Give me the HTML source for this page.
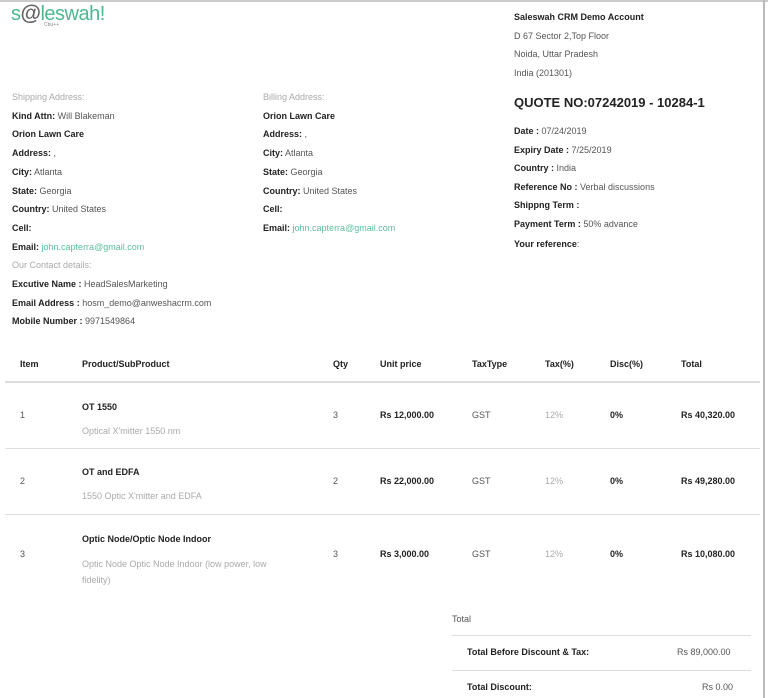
<!DOCTYPE html>
<html><head><meta charset="utf-8"><style>
body{margin:0;width:768px;height:698px;background:#fff;position:relative;overflow:hidden;font-family:"Liberation Sans",sans-serif;font-size:9px;color:#555;}
.a{position:absolute;white-space:nowrap;}
b{color:#222;font-weight:bold;}
.g{color:#aaa;}
.t{color:#5bbf9f;}
.hr{position:absolute;height:1px;background:#ddd;}
</style></head><body>
<div style="position:absolute;left:0;top:0;width:768px;height:2px;background:#ccc"></div>
<div style="position:absolute;left:763px;top:0;width:2px;height:698px;background:#bbb"></div>

<div class="a" style="left:11px;top:2px;font-size:20px;color:#4cb98f;letter-spacing:-0.5px">s<span style="color:#666;font-weight:bold;font-size:21px">@</span>leswah!</div>
<div class="a" style="left:44px;top:22px;font-size:5px;color:#888">Cbu++</div>

<div class="a" style="left:12px;top:88px;line-height:18.7px">
<span class="g">Shipping Address:</span><br>
<b>Kind Attn:</b> Will Blakeman<br>
<b>Orion Lawn Care</b><br>
<b>Address:</b> ,<br>
<b>City:</b> Atlanta<br>
<b>State:</b> Georgia<br>
<b>Country:</b> United States<br>
<b>Cell:</b><br>
<b>Email:</b> <span class="t">john.capterra@gmail.com</span><br>
<span class="g">Our Contact details:</span><br>
<b>Excutive Name :</b> HeadSalesMarketing<br>
<b>Email Address :</b> hosm_demo@anweshacrm.com<br>
<b>Mobile Number :</b> 9971549864
</div>

<div class="a" style="left:263px;top:88px;line-height:18.7px">
<span class="g">Billing Address:</span><br>
<b>Orion Lawn Care</b><br>
<b>Address:</b> ,<br>
<b>City:</b> Atlanta<br>
<b>State:</b> Georgia<br>
<b>Country:</b> United States<br>
<b>Cell:</b><br>
<b>Email:</b> <span class="t">john.capterra@gmail.com</span>
</div>

<div class="a" style="left:514px;top:8px;line-height:18.7px">
<b>Saleswah CRM Demo Account</b><br>D 67 Sector 2,Top Floor<br>Noida, Uttar Pradesh<br>India (201301)
</div>
<div class="a" style="left:514px;top:95px;font-size:13px;font-weight:bold;color:#222">QUOTE NO:07242019 - 10284-1</div>
<div class="a" style="left:514px;top:122px;line-height:18.5px">
<b>Date :</b> 07/24/2019<br><b>Expiry Date :</b> 7/25/2019<br><b>Country :</b> India<br><b>Reference No :</b> Verbal discussions<br><b>Shippng Term :</b><br><b>Payment Term :</b> 50% advance
</div>
<div class="a" style="left:514px;top:239px"><b>Your reference</b>:</div>

<div class="a" style="left:20px;top:359px;font-weight:bold;color:#222">Item</div>
<div class="a" style="left:82px;top:359px;font-weight:bold;color:#222">Product/SubProduct</div>
<div class="a" style="left:333px;top:359px;font-weight:bold;color:#222">Qty</div>
<div class="a" style="left:380px;top:359px;font-weight:bold;color:#222">Unit price</div>
<div class="a" style="left:472px;top:359px;font-weight:bold;color:#222">TaxType</div>
<div class="a" style="left:545px;top:359px;font-weight:bold;color:#222">Tax(%)</div>
<div class="a" style="left:610px;top:359px;font-weight:bold;color:#222">Disc(%)</div>
<div class="a" style="left:681px;top:359px;font-weight:bold;color:#222">Total</div>
<div class="hr" style="left:5px;top:381px;width:755px;height:2px"></div>

<div class="a" style="left:20px;top:410px">1</div>
<div class="a" style="left:82px;top:402px"><b>OT 1550</b></div>
<div class="a g" style="left:82px;top:426px">Optical X'mitter 1550 nm</div>
<div class="a" style="left:333px;top:410px">3</div>
<div class="a" style="left:380px;top:410px"><b>Rs 12,000.00</b></div>
<div class="a" style="left:472px;top:410px">GST</div>
<div class="a g" style="left:545px;top:410px">12%</div>
<div class="a" style="left:610px;top:410px"><b>0%</b></div>
<div class="a" style="left:681px;top:410px"><b>Rs 40,320.00</b></div>
<div class="hr" style="left:5px;top:448px;width:755px"></div>

<div class="a" style="left:20px;top:476px">2</div>
<div class="a" style="left:82px;top:467px"><b>OT and EDFA</b></div>
<div class="a g" style="left:82px;top:491px">1550 Optic X'mitter and EDFA</div>
<div class="a" style="left:333px;top:476px">2</div>
<div class="a" style="left:380px;top:476px"><b>Rs 22,000.00</b></div>
<div class="a" style="left:472px;top:476px">GST</div>
<div class="a g" style="left:545px;top:476px">12%</div>
<div class="a" style="left:610px;top:476px"><b>0%</b></div>
<div class="a" style="left:681px;top:476px"><b>Rs 49,280.00</b></div>
<div class="hr" style="left:5px;top:514px;width:755px"></div>

<div class="a" style="left:20px;top:549px">3</div>
<div class="a" style="left:82px;top:534px"><b>Optic Node/Optic Node Indoor</b></div>
<div class="a g" style="left:82px;top:556px;line-height:16px;white-space:normal;width:210px">Optic Node Optic Node Indoor (low power, low fidelity)</div>
<div class="a" style="left:333px;top:549px">3</div>
<div class="a" style="left:380px;top:549px"><b>Rs 3,000.00</b></div>
<div class="a" style="left:472px;top:549px">GST</div>
<div class="a g" style="left:545px;top:549px">12%</div>
<div class="a" style="left:610px;top:549px"><b>0%</b></div>
<div class="a" style="left:681px;top:549px"><b>Rs 10,080.00</b></div>

<div class="a" style="left:452px;top:614px">Total</div>
<div class="hr" style="left:452px;top:635px;width:299px"></div>
<div class="a" style="left:467px;top:647px"><b>Total Before Discount &amp; Tax:</b></div>
<div class="a" style="left:677px;top:647px">Rs 89,000.00</div>
<div class="hr" style="left:452px;top:670px;width:299px"></div>
<div class="a" style="left:467px;top:682px"><b>Total Discount:</b></div>
<div class="a" style="left:702px;top:682px">Rs 0.00</div>
</body></html>
